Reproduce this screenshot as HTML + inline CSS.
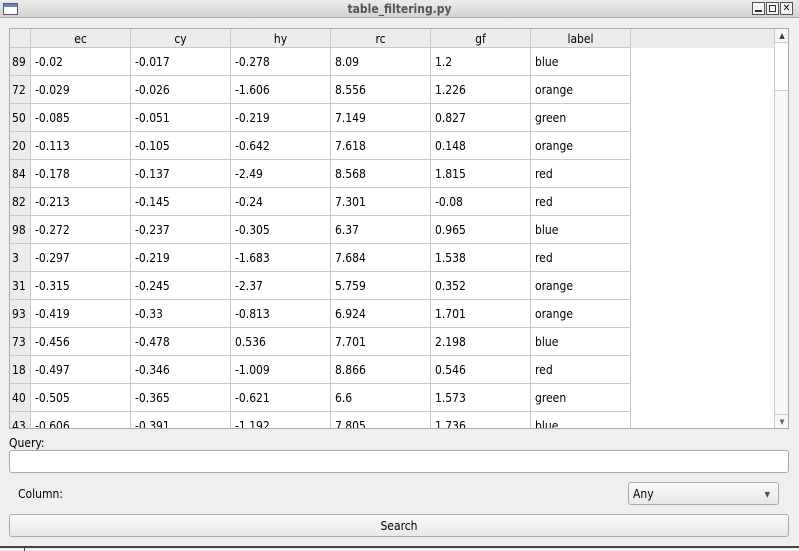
<!DOCTYPE html><html><head><style>
*{box-sizing:border-box;margin:0;padding:0}
body{width:799px;height:551px;background:#efefef;font-family:"DejaVu Sans Condensed","DejaVu Sans",sans-serif;font-stretch:condensed;font-size:12px;color:#000;position:relative;overflow:hidden}
.abs{position:absolute}
#title{left:0;top:0;width:799px;height:18px;background:linear-gradient(#ececec,#d4d4d4);border-bottom:1px solid #aaa}
#title .t{left:0;width:799px;text-align:center;top:2px;font-weight:bold;color:#555;font-size:12px}
.wb{top:2px;width:13px;height:13px;border:1px solid #555;background:#f4f4f4}
#tbl{left:9px;top:28px;width:780px;height:401px;border:1px solid #aaa;background:#fff;overflow:hidden}
.hd{top:0;height:19px;background:#ececec;border-right:1px solid #c8c8c8;border-bottom:1px solid #c8c8c8;text-align:center;line-height:21px}
.rn{left:0;width:21px;height:28px;background:#ececec;border-right:1px solid #c8c8c8;border-bottom:1px solid #c8c8c8;padding-left:2px;line-height:28px}
.c{width:100px;height:28px;border-right:1px solid #c8c8c8;border-bottom:1px solid #c8c8c8;padding-left:4px;line-height:28px}
#sb{left:764px;top:0;width:15px;height:399px;background:#f7f7f7;border-left:1px solid #ccc}
.inp{background:#fff;border:1px solid #aaa;border-radius:3px}
.btn{background:linear-gradient(#fafafa,#e8e8e8);border:1px solid #aaa;border-radius:3px;text-align:center}
</style></head><body>
<div id="title" class="abs">
<div class="abs" style="left:3px;top:3px;width:15px;height:12px;border:1px solid #557;background:#fff"><div style="height:3px;background:#6a86b8"></div></div>
<div class="abs t">table_filtering.py</div>
<div class="abs wb" style="left:752px"><div style="margin:7px 2px 0;height:2px;background:#333"></div></div>
<div class="abs wb" style="left:766px"><div style="margin:2px;height:7px;border:1px solid #333"></div></div>
<div class="abs wb" style="left:780px;text-align:center;line-height:11px;font-size:10px;font-weight:bold">✕</div>
</div>
<div id="tbl" class="abs">
<div class="abs hd" style="left:0;width:21px"></div>
<div class="abs hd" style="left:21px;width:100px">ec</div>
<div class="abs hd" style="left:121px;width:100px">cy</div>
<div class="abs hd" style="left:221px;width:100px">hy</div>
<div class="abs hd" style="left:321px;width:100px">rc</div>
<div class="abs hd" style="left:421px;width:100px">gf</div>
<div class="abs hd" style="left:521px;width:100px">label</div>
<div class="abs" style="left:621px;top:0;width:143px;height:19px;background:#ececec"></div>
<div id="rows"></div>
<div id="sb" class="abs">
<div class="abs" style="left:0;top:0;width:14px;height:14px;border-bottom:1px solid #ccc;text-align:center;font-size:8px;line-height:14px;color:#444">▲</div>
<div class="abs" style="left:0;top:15px;width:14px;height:47px;background:#fff;border-bottom:1px solid #ccc"></div>
<div class="abs" style="left:0;top:385px;width:14px;height:14px;border-top:1px solid #ccc;text-align:center;font-size:7px;line-height:14px;color:#666">▼</div>
</div>
</div>
<div class="abs" style="left:9px;top:436px">Query:</div>
<div class="abs inp" style="left:9px;top:450px;width:780px;height:23px"></div>
<div class="abs" style="left:18px;top:487px">Column:</div>
<div class="abs btn" style="left:628px;top:482px;width:151px;height:23px;text-align:left;padding-left:4px;line-height:23px">Any<span style="position:absolute;right:8px;font-size:8px;color:#555">▼</span></div>
<div class="abs btn" style="left:9px;top:514px;width:780px;height:23px;line-height:23px">Search</div>
<div class="abs" style="left:0;top:546px;width:799px;height:2px;background:#444"></div>
<div class="abs" style="left:24px;top:546px;width:1px;height:5px;background:#444"></div>
<script>
var d=[[89,"-0.02","-0.017","-0.278","8.09","1.2","blue"],[72,"-0.029","-0.026","-1.606","8.556","1.226","orange"],[50,"-0.085","-0.051","-0.219","7.149","0.827","green"],[20,"-0.113","-0.105","-0.642","7.618","0.148","orange"],[84,"-0.178","-0.137","-2.49","8.568","1.815","red"],[82,"-0.213","-0.145","-0.24","7.301","-0.08","red"],[98,"-0.272","-0.237","-0.305","6.37","0.965","blue"],[3,"-0.297","-0.219","-1.683","7.684","1.538","red"],[31,"-0.315","-0.245","-2.37","5.759","0.352","orange"],[93,"-0.419","-0.33","-0.813","6.924","1.701","orange"],[73,"-0.456","-0.478","0.536","7.701","2.198","blue"],[18,"-0.497","-0.346","-1.009","8.866","0.546","red"],[40,"-0.505","-0.365","-0.621","6.6","1.573","green"],[43,"-0.606","-0.391","-1.192","7.805","1.736","blue"]];
var h="";d.forEach(function(r,i){var t=19+i*28;h+='<div class="abs rn" style="top:'+t+'px">'+r[0]+'</div>';for(var j=1;j<7;j++)h+='<div class="abs c" style="top:'+t+'px;left:'+(21+(j-1)*100)+'px">'+r[j]+'</div>';});
document.getElementById("rows").innerHTML=h;
</script>
</body></html>
